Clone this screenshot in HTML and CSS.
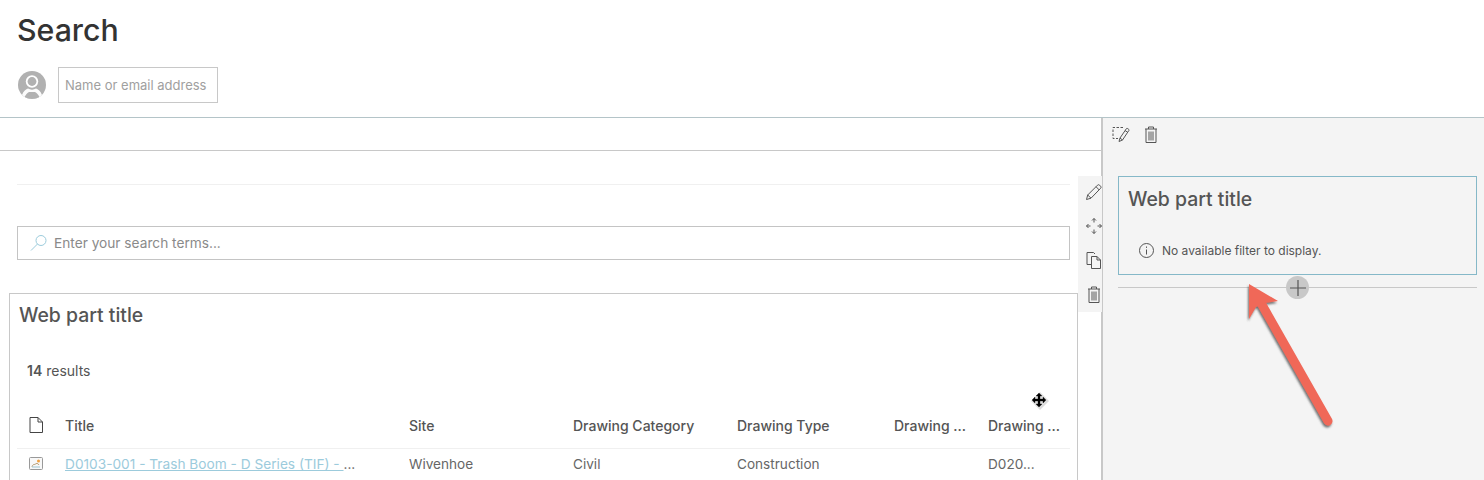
FILE: index.html
```html
<!DOCTYPE html>
<html lang="en">
<head>
<meta charset="utf-8">
<title>Search</title>
<link rel="stylesheet" href="styles.css">
</head>
<body>
<header class="head">
  <h1 class="page-title">Search</h1>
  <div class="people">
    <svg class="avatar" width="28" height="28" viewBox="0 0 28 28"><defs><clipPath id="av"><circle cx="14" cy="14" r="14"/></clipPath></defs><g clip-path="url(#av)"><rect width="28" height="28" fill="#b1b1b1"/><circle cx="14" cy="10.500" r="6.200" fill="#fff"/><circle cx="14" cy="10.500" r="4.400" fill="#b1b1b1"/><path d="M4 24c1.500-4 4-6 6-6.500 2.500 1.500 5.500 1.500 8 0 2 .5 4.500 2.500 6 6.500-1 2-3 2-4 4H8c-1-2-3-2-4-4z" fill="#fff" opacity=".95"/><path d="M6 28c1-4 3-6 5-7h6c2 1 4 3 5 7z" fill="#b1b1b1"/></g></svg>
    <div class="people-input">Name or email address</div>
  </div>
</header>
<div class="canvas">
  <main class="main">
    <div class="band"></div>
    <div class="content">
      <div class="faint-rule"></div>
      <div class="search-box">
        <svg class="search-icon" width="18" height="18" viewBox="0 0 18 18" fill="none" stroke="#9cccdc" stroke-width="1"><circle cx="11" cy="6.500" r="5"/><path d="M7.500 10 1 16.500"/></svg>
        <span>Enter your search terms...</span>
      </div>
    </div>
    <section class="card">
      <h2 class="wp-title">Web part title</h2>
      <p class="count"><b>14</b> results</p>
      <div class="table">
        <div class="row row-head">
          <div class="cell-icon"><svg width="14" height="16" viewBox="0 0 14 16" fill="none" stroke="#444" stroke-width="1"><path d="M1 .5h8l4.500 4.500v10.500H1zM9 .5V5h4.500"/></svg></div>
          <div>Title</div><div>Site</div><div>Drawing Category</div><div>Drawing Type</div><div>Drawing ...</div><div>Drawing ...</div>
        </div>
        <div class="row row-body">
          <div class="cell-icon"><svg width="15" height="14" viewBox="0 0 15 14" fill="none"><rect x=".5" y=".5" width="13" height="12" rx="1" fill="#f8f8f8" stroke="#999"/><circle cx="9.500" cy="4" r="1.500" fill="#f0a040"/><path d="M3 10c0-2 2-3 3-2.500C7 6 9 6 10 8" stroke="#b9a27c"/><path d="M3 10h8" stroke="#9cc4d0"/></svg></div>
          <div class="title-cell"><a class="doc-link" href="#">D0103-001 - Trash Boom - D Series (TIF) - </a><span class="ell">...</span></div>
          <div>Wivenhoe</div><div>Civil</div><div>Construction</div><div></div><div>D020...</div>
        </div>
      </div>
    </section>
    <aside class="tools">
      <div class="tool"><svg width="18" height="18" viewBox="0 0 18 18" fill="none" stroke="#555"><path d="M1.500 16.500l1.200-4.500L12.500 2.200a1.500 1.500 0 0 1 2.100 0l1 1a1.500 1.500 0 0 1 0 2.100L6 15.200zM2.700 12 6 15.200M11 3.700l3.300 3.300"/></svg></div>
      <div class="tool"><svg width="16" height="16" viewBox="0 0 16 16" fill="none" stroke="#555"><path d="M8 .5v4M8 11.500v4M.5 8h4M11.500 8h4M6 2.500l2-2 2 2M6 13.500l2 2 2-2M2.500 6l-2 2 2 2M13.500 6l2 2-2 2"/></svg></div>
      <div class="tool"><svg width="16" height="17" viewBox="0 0 16 17" fill="none" stroke="#555"><path d="M5.500 12.500H1V.5h6.500L9 2"/><path d="M5.500 4.500H11l3.500 3.500v8.500h-9zM11 4.500V8h3.500"/></svg></div>
      <div class="tool"><svg width="14" height="17" viewBox="0 0 14 17" fill="none" stroke="#555"><path d="M1 3h12M4.500 3V1h5v2M2 3v13.500h10V3M5 5.500v9M7 5.500v9M9 5.500v9"/></svg></div>
    </aside>
  </main>
  <aside class="panel">
    <div class="panel-tools">
      <svg width="18" height="17" viewBox="0 0 18 17" fill="none" stroke="#555"><path d="M11 1.500H1v11h5" stroke-dasharray="2.500 1.500"/><path d="M7 15.500l1-3.500 6.500-9.500c.5-.7 3 1 2.500 1.800L10.500 14zM8 12l2.500 2M13 4.500l2.800 1.900"/></svg>
      <svg width="14" height="17" viewBox="0 0 14 17" fill="none" stroke="#555"><path d="M1 3h12M4.500 3V1h5v2M2 3v13.500h10V3M5 5.500v9M7 5.500v9M9 5.500v9"/></svg>
    </div>
    <section class="filter">
      <h2 class="wp-title">Web part title</h2>
      <div class="notice">
        <svg width="15" height="15" viewBox="0 0 15 15" fill="none" stroke="#555"><circle cx="7.500" cy="7.500" r="7"/><path d="M7.500 6.500v5M7.500 3.500v1.400"/></svg>
        <span>No available filter to display.</span>
      </div>
    </section>
    <div class="add-line"><span class="add-btn"><svg width="16" height="16" viewBox="0 0 16 16" stroke="#555" stroke-width="1.200"><path d="M8 0v16M0 8h16"/></svg></span></div>
  </aside>
  <svg class="arrow" width="110" height="170" viewBox="0 0 110 170">
    <defs><filter id="sh" x="-20%" y="-20%" width="140%" height="140%"><feDropShadow dx="-1" dy="2" stdDeviation="1" flood-color="#444" flood-opacity=".75"/></filter></defs>
    <g filter="url(#sh)"><path d="M23 30 90 148" stroke="#f06858" stroke-width="9" stroke-linecap="round"/><path d="M11 11 40 28 27 30 18 34 11 46z" fill="#f06858"/></g>
  </svg>
  <svg class="move-cursor" width="18" height="18" viewBox="0 0 18 18"><path d="M9 0 18 9 9 18 0 9z" fill="#999" opacity=".35"/><path d="M8 1 11 4H9V7h3V5l3 3-3 3V9H9v3h2l-3 3-3-3h2V9H4v2L1 8l3-3v2h3V4H5z" fill="#000" stroke="#000" stroke-width=".3"/></svg>
</div>
</body>
</html>
```

FILE: styles.css
```css
* { box-sizing: border-box; }
html, body { margin: 0; height: 480px; overflow: hidden; background: #fff; font-family: Inter, "Liberation Sans", sans-serif; color: #555; }
.head { height: 118px; padding: 12px 0 0 17px; border-bottom: 1px solid #b4c4c8; }
.page-title { margin: 0; font-size: 30.3px; line-height: 36px; font-weight: 500; color: #333; }
.people { display: flex; align-items: center; gap: 12px; margin-top: 19px; margin-left: 1px; }
.avatar { display: block; }
.people-input { width: 160px; height: 36px; border: 1px solid #c8c8c8; padding: 0 6px; font-size: 13px; line-height: 34px; color: #a0a0a0; white-space: nowrap; }
.canvas { position: relative; display: flex; height: 362px; overflow: hidden; }
.main { position: relative; width: 1103px; flex: none; border-right: 2px solid #c8c8c8; }
.band { height: 33px; border-bottom: 1px solid #c8c8c8; }
.content { padding: 33px 31px 0 17px; }
.faint-rule { border-top: 1px solid #f0f0f0; height: 42px; }
.search-box { display: flex; align-items: center; height: 34px; border: 1px solid #c4c4c4; padding: 0 0 0 12px; gap: 6px; font-size: 13.7px; color: #8a8a8a; }
.search-icon { flex: none; }
.card { margin: 33px 0 0 9px; width: 1069px; height: 200px; border: 1px solid #c8c8c8; border-bottom: 0; padding: 8px 8px 0 9px; }
.wp-title { margin: 0; font-size: 19.4px; line-height: 26px; font-weight: 500; color: #555; }
.count { margin: 34px 0 0 8px; font-size: 14px; line-height: 17px; color: #555; }
.count b { font-weight: 600; }
.table { margin: 25px 0 0 -2px; font-size: 14px; }
.row { display: grid; grid-template-columns: 48px 344px 164px 164px 157px 94px 82px; align-items: center; padding-left: 0; width: 1053px; }
.row > div { white-space: nowrap; overflow: hidden; }
.row-head { height: 45px; padding-bottom: 2px; font-weight: 500; border-bottom: 1px solid #f0f0f0; }
.row-body { height: 30px; color: #666; font-size: 13.6px; }
.cell-icon { display: flex; padding-left: 12px; }
.cell-icon svg { display: block; }
.doc-link { color: #9ccbdc; text-decoration: underline; font-size: 13.7px; }
.ell { color: #666; }
.tools { position: absolute; left: 1078px; top: 58px; width: 24px; height: 136px; padding-left: 8px; background: #f4f4f4; display: flex; flex-direction: column; }
.tool { height: 34px; padding-bottom: 2px; display: flex; align-items: center; justify-content: center; }
.tool svg { flex: none; }
.panel { flex: 1; background: #f4f4f4; padding: 8px 7px 0 15px; }
.panel-tools { display: flex; align-items: center; gap: 14px; height: 17px; margin-left: -6px; }
.filter { margin-top: 33px; height: 99px; border: 1px solid #85b8c8; padding: 9px 9px 0 9px; }
.notice { display: flex; align-items: center; gap: 8px; margin: 31px 0 0 11px; font-size: 12px; line-height: 15px; color: #555; }
.add-line { position: relative; margin-top: 12px; border-top: 1px solid #c8c8c8; height: 1px; }
.add-btn { position: absolute; left: 168px; top: -12px; width: 23px; height: 23px; border-radius: 50%; background: #c8c8c8; display: flex; align-items: center; justify-content: center; }
.arrow { position: absolute; left: 1238px; top: 155px; }
.move-cursor { position: absolute; left: 1031px; top: 274px; }
```
